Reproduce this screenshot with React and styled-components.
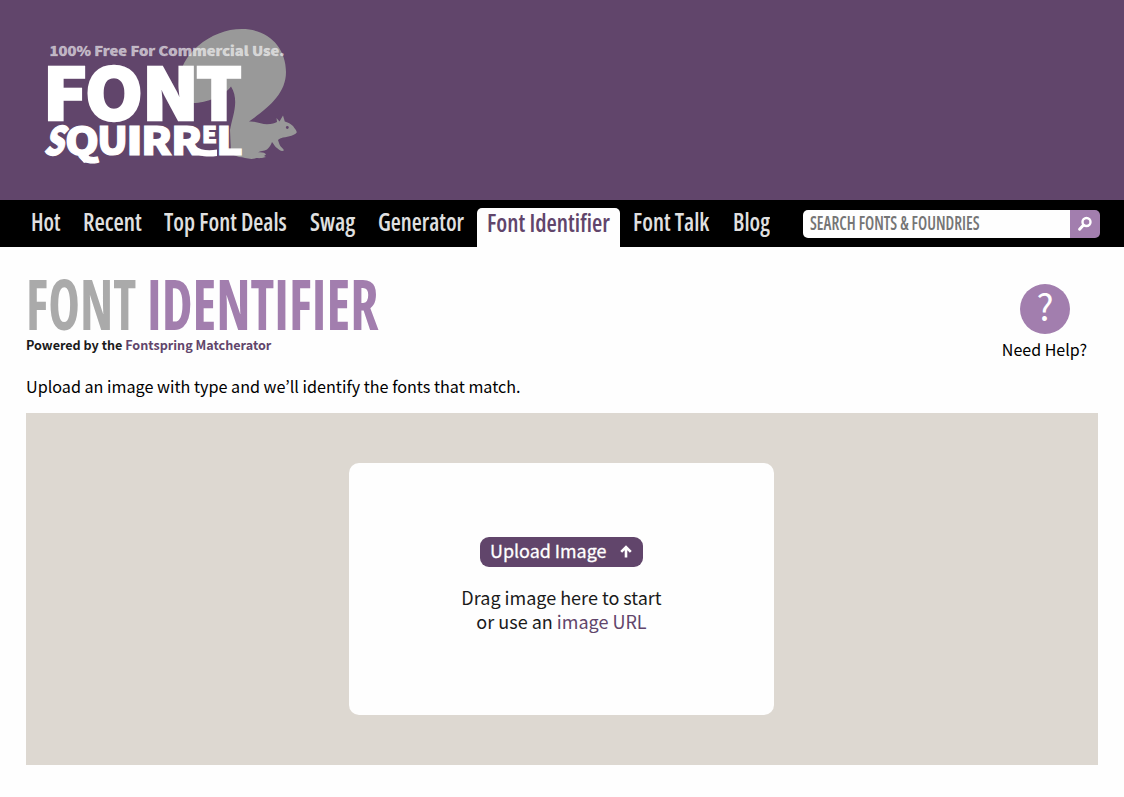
import React from 'react';
import styled, { createGlobalStyle } from 'styled-components';

const NAV_ITEMS = [
  { label: 'Hot', width: 29, scale: 0.87 },
  { label: 'Recent', width: 58, scale: 0.91 },
  { label: 'Top Font Deals', width: 123, scale: 0.888 },
  { label: 'Swag', width: 45, scale: 0.9 },
  { label: 'Generator', width: 86, scale: 0.885 },
  { label: 'Font Identifier', width: 123, scale: 0.907, active: true },
  { label: 'Font Talk', width: 77, scale: 0.89 },
  { label: 'Blog', width: 38, scale: 0.88 },
];

const Logo = () => (
  <LogoSvg viewBox="40 25 262 142" width="262" height="142">
    <path
      fill="#999"
      d="M193 103C186 104 180 99 179 89C177 72 186 56 198 46C211 35 226 29 242 29C268 29 286 47 286 72C286 94 268 108 249 121.500C256 121 261 124 267 124.300C272 124 275 123 277 122L276.500 118L279.500 121.500L283 115.500L284.800 121.500C289 123 291 124 293 126C295 129 297 131 296.700 132.500C295 135 289 137 283 137.500C281 138 279 139 278 140L279 143C280 147 283 148 284 150.300C282 152 279 150 277 148C275 147 274 144 272 142C271 145 269 148 267 149.500C264 151 260 151 258 152.500C262 152 265 153 266 154.500L264 156L266 157C260 159 257 157.500 255 158.500C249 160 244 157 239 157L231 154L230 130C232 117 240 101 231 86.500C224 96 207 103 193 103Z"
    />
    <circle cx="287.300" cy="127.500" r="1.400" fill="#61456b" />
    <Tagline x="49.500" y="55.500" textLength="235" lengthAdjust="spacingAndGlyphs">
      100% Free For Commercial Use.
    </Tagline>
    <BigLetter>
      <text x="43" y="120" textLength="44" lengthAdjust="spacingAndGlyphs">F</text>
      <text x="85" y="120" textLength="58" lengthAdjust="spacingAndGlyphs">O</text>
      <text x="142" y="120" textLength="57" lengthAdjust="spacingAndGlyphs">N</text>
      <text x="196" y="120" textLength="46" lengthAdjust="spacingAndGlyphs">T</text>
    </BigLetter>
    <SmallLetter>
      <text
        x="0"
        y="0"
        textLength="20"
        lengthAdjust="spacingAndGlyphs"
        transform="translate(43 155) skewX(-16)"
      >
        S
      </text>
      <text x="65" y="155" textLength="34" lengthAdjust="spacingAndGlyphs">Q</text>
      <text x="97" y="155" textLength="31" lengthAdjust="spacingAndGlyphs">U</text>
      <text x="126" y="155" textLength="17" lengthAdjust="spacingAndGlyphs">I</text>
      <text x="141" y="155" textLength="31" lengthAdjust="spacingAndGlyphs">R</text>
      <text x="171" y="155" textLength="31" lengthAdjust="spacingAndGlyphs">R</text>
      <RaisedLetter x="202" y="143" textLength="15" lengthAdjust="spacingAndGlyphs">
        E
      </RaisedLetter>
      <text x="216" y="155" textLength="27" lengthAdjust="spacingAndGlyphs">L</text>
    </SmallLetter>
    <path d="M195 146C200 150 208 151 217 149.500V156C206 157.500 197 156 190 150Z" fill="#fff" />
    <path d="M80 154L89 154C88 157 90 158 93 160L84 163C81 160 80 157 80 154Z" fill="#fff" />
  </LogoSvg>
);

const App = () => {
  return (
    <>
      <GlobalStyle />
      <Header>
        <Logo />
      </Header>
      <Nav>
        <NavList>
          {NAV_ITEMS.map(({ label, width, scale, active }) => (
            <NavItem key={label} $active={active}>
              <Condensed $width={width} $scale={scale}>
                <span>{label}</span>
              </Condensed>
            </NavItem>
          ))}
        </NavList>
        <Search>
          <SearchField>
            <Condensed $width={170} $scale={0.83}>
              <span>SEARCH FONTS &amp; FOUNDRIES</span>
            </Condensed>
          </SearchField>
          <SearchButton aria-label="Search">
            <svg width="16" height="16" viewBox="0 0 16 16" fill="none" stroke="#fff">
              <circle cx="9.500" cy="6" r="4" strokeWidth="2.400" />
              <path d="M6.300 9.300L2.600 13.200" strokeWidth="3" strokeLinecap="round" />
            </svg>
          </SearchButton>
        </Search>
      </Nav>
      <Main>
        <TitleRow>
          <div>
            <Title>
              <Condensed $width={121} $scale={0.765}>
                <span>FONT</span>
              </Condensed>
              <Condensed $width={232} $scale={0.79} $accent>
                <span>IDENTIFIER</span>
              </Condensed>
            </Title>
            <Powered>
              Powered by the <Link>Fontspring Matcherator</Link>
            </Powered>
          </div>
          <Help>
            <HelpCircle>?</HelpCircle>
            Need Help?
          </Help>
        </TitleRow>
        <Intro>Upload an image with type and we’ll identify the fonts that match.</Intro>
        <Panel>
          <DropZone>
            <UploadButton>
              Upload Image
              <svg width="12" height="13" viewBox="0 0 12 13" fill="none" stroke="#fff">
                <path d="M6 12.500V2.500M1.200 6.800L6 2L10.800 6.800" strokeWidth="2.600" />
              </svg>
            </UploadButton>
            <DropText>
              Drag image here to start
              <br />
              or use an <Link>image URL</Link>
            </DropText>
          </DropZone>
        </Panel>
      </Main>
    </>
  );
};

const GlobalStyle = createGlobalStyle`
  * {
    box-sizing: border-box;
  }
  body {
    margin: 0;
    background: #fefefe;
    color: #1a1a1a;
    font-family: 'Noto Sans CJK JP', 'Noto Sans', sans-serif;
  }
`;

const Header = styled.header`
  height: 200px;
  padding: 25px 40px;
  background: #61456b;
`;

const LogoSvg = styled.svg`
  display: block;
  font-family: 'Noto Sans CJK JP', sans-serif;
  font-weight: 900;
`;

const Tagline = styled.text`
  font-size: 13px;
  fill: rgba(255, 255, 255, 0.6);
  stroke: rgba(255, 255, 255, 0.3);
  stroke-width: 0.6px;
`;

const BigLetter = styled.g`
  font-size: 71px;
  fill: #fff;
  stroke: #fff;
  stroke-width: 2.5px;
`;

const SmallLetter = styled.g`
  font-size: 39px;
  fill: #fff;
  stroke: #fff;
  stroke-width: 1.2px;
`;

const RaisedLetter = styled.text`
  font-size: 23px;
`;

const Condensed = styled.span`
  display: inline-block;
  width: ${({ $width }) => $width}px;
  color: ${({ $accent }) => ($accent ? '#a27eae' : 'inherit')};
  font-family: 'Open Sans', sans-serif;
  font-stretch: 75%;
  white-space: nowrap;

  > span {
    display: inline-block;
    transform: scaleX(${({ $scale }) => $scale});
    transform-origin: left;
  }
`;

const Nav = styled.nav`
  display: flex;
  justify-content: space-between;
  height: 47px;
  padding: 0 24px 0 21px;
  background: #000;
`;

const NavList = styled.div`
  display: flex;
  gap: 3px;
`;

const NavItem = styled.a`
  display: flex;
  height: ${({ $active }) => ($active ? 39 : 47)}px;
  margin-top: ${({ $active }) => ($active ? 8 : 0)}px;
  padding: 0 10px;
  border-radius: 5px 5px 0 0;
  background: ${({ $active }) => ($active ? '#fefefe' : 'transparent')};
  color: ${({ $active }) => ($active ? '#61456b' : '#e0e0e0')};
  font-size: 26px;
  font-weight: 620;
  line-height: ${({ $active }) => ($active ? 28 : 42)}px;
`;

const Search = styled.div`
  display: flex;
  width: 297px;
  height: 28px;
  margin-top: 10px;
  border-radius: 5px;
  overflow: hidden;
`;

const SearchField = styled.div`
  display: flex;
  flex: 1;
  padding-left: 7px;
  background: #fefefe;
  color: #757575;
  font-size: 19.5px;
  font-weight: 620;
  line-height: 25px;
`;

const SearchButton = styled.button`
  display: flex;
  align-items: center;
  justify-content: center;
  width: 30px;
  padding: 0;
  border: 0;
  background: #a27eae;
`;

const Main = styled.main`
  padding: 21px 26px 0;
`;

const TitleRow = styled.div`
  display: flex;
  justify-content: space-between;
`;

const Title = styled.h1`
  display: flex;
  height: 69px;
  margin: 0;
  color: #aaa;
  font-size: 70px;
  font-weight: 670;
  line-height: 70px;
`;

const Powered = styled.div`
  font-size: 12.6px;
  font-weight: 700;
  line-height: 16px;
`;

const Link = styled.a`
  color: #61456b;
`;

const Help = styled.div`
  display: flex;
  flex-direction: column;
  align-items: center;
  margin: 16px 11px 0 0;
  color: #000;
  font-size: 16px;
  line-height: 30px;
`;

const HelpCircle = styled.div`
  width: 50px;
  height: 50px;
  margin-left: 1px;
  border-radius: 50%;
  background: #a27eae;
  color: #fff;
  font-size: 36px;
  line-height: 42px;
  text-align: center;
`;

const Intro = styled.p`
  margin: 10px 0 15px;
  color: #000;
  font-size: 16.17px;
  line-height: 24px;
`;

const Panel = styled.section`
  display: flex;
  justify-content: center;
  height: 352px;
  padding: 50px 0;
  background: #ddd8d1;
`;

const DropZone = styled.div`
  display: flex;
  flex-direction: column;
  align-items: center;
  width: 425px;
  margin-right: 1px;
  padding-top: 74px;
  border-radius: 10px;
  background: #fefefe;
`;

const UploadButton = styled.button`
  display: flex;
  justify-content: space-between;
  width: 163px;
  height: 30px;
  padding: 0 11px 0 10px;
  border: 0;
  border-radius: 9px;
  background: #61456b;
  color: #fff;
  font-family: inherit;
  font-size: 17.9px;
  line-height: 26px;
  -webkit-text-stroke: 0.3px #fff;

  svg {
    margin-top: 8px;
  }
`;

const DropText = styled.p`
  margin: 18px 0 0;
  font-size: 18px;
  line-height: 24px;
  text-align: center;
`;

export default App;
